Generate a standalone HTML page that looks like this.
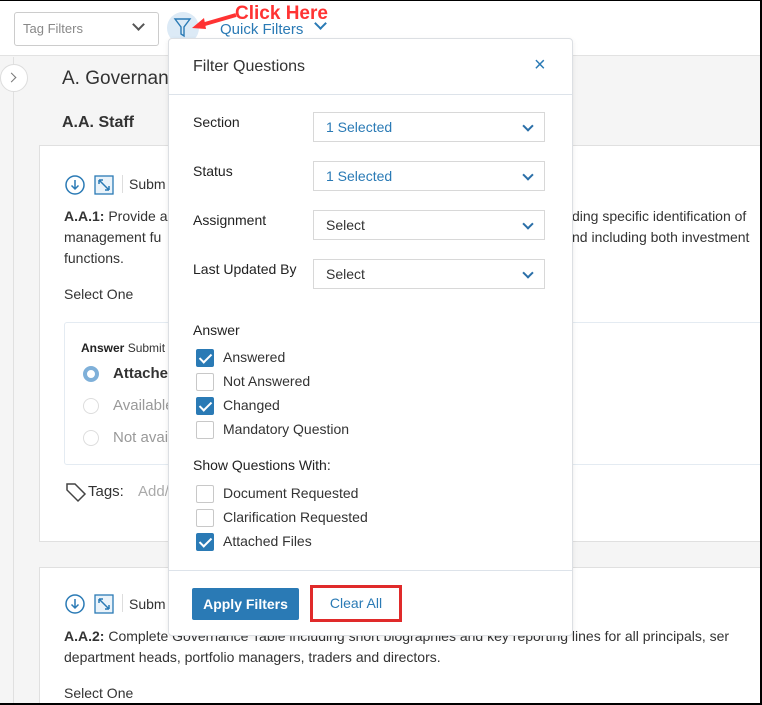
<!DOCTYPE html>
<html><head><style>
*{box-sizing:border-box;margin:0;padding:0}
html,body{width:762px;height:705px;overflow:hidden}
body{background:#000;font-family:"Liberation Sans",sans-serif;font-size:14px;color:#333;position:relative}
.page{position:absolute;left:0;top:1px;width:760px;height:702px;background:#f5f5f5;overflow:hidden}
.abs{position:absolute}
.t{position:absolute;white-space:nowrap}
.cb{position:absolute;left:196px;width:18px;height:18px;border:1px solid #c8c8c8;border-radius:2px;background:#fff}
.cb.on{background:#2a7ab5;border-color:#2a7ab5}
.cb.on:after{content:"";position:absolute;left:5px;top:1px;width:5px;height:10px;border:solid #fff;border-width:0 2px 2px 0;transform:rotate(45deg)}
.sel{position:absolute;left:313px;width:232px;height:30px;border:1px solid #d8d8d8;background:#fff;padding:6px 12px;font-size:14px}
.chev{position:absolute;right:12px;top:9px;width:8px;height:8px;border:solid #2a6fa8;border-width:0 2px 2px 0;transform:rotate(45deg)}
.lab{position:absolute;left:193px;font-size:14px;color:#222}
.cl{position:absolute;left:223px;font-size:14px;color:#333}
</style></head><body>
<div class="page">
 <div class="abs" style="left:0;top:0;width:760px;height:55px;background:#fff;border-bottom:1px solid #e2e2e2"></div>
 <div class="abs" style="left:14px;top:11px;width:145px;height:34px;border:1px solid #ccc;border-radius:3px;background:#fff"></div>
 <div class="t" style="left:23px;top:20px;color:#888;font-size:13px">Tag Filters</div>
 <div class="abs" style="left:134px;top:19px;width:9px;height:9px;border:solid #555;border-width:0 2px 2px 0;transform:rotate(45deg)"></div>
 <div class="abs" style="left:167px;top:11px;width:32px;height:32px;border-radius:50%;background:#dceaf6"></div>
 <svg class="abs" style="left:173px;top:15px" width="20" height="22" viewBox="0 0 20 22"><path d="M2 3h15l-6 8v9l-3-2v-7z" fill="none" stroke="#2a7ab5" stroke-width="1.4"/></svg>
 <div class="t" style="left:220px;top:20px;color:#2a7ab5;font-size:15px">Quick Filters</div>
 <div class="abs" style="left:316px;top:18px;width:9px;height:9px;border:solid #2a7ab5;border-width:0 2px 2px 0;transform:rotate(45deg)"></div>
 <div class="t" style="left:235px;top:2px;color:#f33;font-size:19px;font-weight:bold">Click Here</div>
 <svg class="abs" style="left:190px;top:10px" width="50" height="20"><path d="M46 4L8 15" stroke="#f33" stroke-width="4"/><path d="M2 17l12-10 2 11z" fill="#f33"/></svg>
 <div class="abs" style="left:13px;top:56px;width:1px;height:646px;background:#e0e0e0"></div>
 <div class="abs" style="left:0;top:63px;width:28px;height:28px;border-radius:50%;background:#fff;border:1px solid #ddd"></div>
 <div class="abs" style="left:8px;top:73px;width:7px;height:7px;border:solid #777;border-width:1.5px 1.5px 0 0;transform:rotate(45deg)"></div>
 <div class="t" style="left:62px;top:67px;font-size:19px;color:#333">A. Governance</div>
 <div class="t" style="left:62px;top:113px;font-size:16px;font-weight:bold;color:#333">A.A. Staff</div>
 <div class="abs" style="left:39px;top:144px;width:730px;height:397px;background:#fff;border:1px solid #e0e0e0"></div>
 <svg class="abs" style="left:65px;top:174px" width="20" height="20"><circle cx="10" cy="10" r="9" fill="none" stroke="#2a7ab5" stroke-width="1.5"/><path d="M10 5v9M6.5 10.5L10 14l3.5-3.5" fill="none" stroke="#2a7ab5" stroke-width="1.5"/></svg>
 <svg class="abs" style="left:94px;top:174px" width="20" height="20"><rect x="1" y="1" width="18" height="18" fill="#eaf3fa" stroke="#2a7ab5" stroke-width="1.3"/><path d="M5 5l10 10M5 5h4M5 5v4M15 15h-4M15 15v-4" stroke="#2a7ab5" stroke-width="1.5" fill="none"/></svg>
 <div class="abs" style="left:122px;top:174px;width:1px;height:18px;background:#ddd"></div>
 <div class="t" style="left:129px;top:175px;font-size:14px">Subm</div>
 <div class="t" style="left:64px;top:205px;font-size:14px;line-height:21px"><b>A.A.1:</b> Provide a<br>management fu<br>functions.</div>
 <div class="t" style="left:572px;top:205px;font-size:14px;line-height:21px">ding specific identification of<br>nd including both investment</div>
 <div class="t" style="left:64px;top:285px">Select One</div>
 <div class="abs" style="left:64px;top:321px;width:710px;height:143px;border:1px solid #e4ebf2;border-radius:3px"></div>
 <div class="t" style="left:81px;top:340px;font-size:12px"><b style="color:#222">Answer</b> Submit</div>
 <div class="abs" style="left:83px;top:365px;width:16px;height:16px;border-radius:50%;border:4px solid #7fb0d9;background:#fff"></div>
 <div class="t" style="left:113px;top:364px;font-size:15px;font-weight:bold;color:#333">Attached</div>
 <div class="abs" style="left:83px;top:397px;width:16px;height:16px;border-radius:50%;border:1px solid #ddd"></div>
 <div class="t" style="left:113px;top:396px;font-size:15px;color:#999">Available</div>
 <div class="abs" style="left:83px;top:429px;width:16px;height:16px;border-radius:50%;border:1px solid #ddd"></div>
 <div class="t" style="left:113px;top:428px;font-size:15px;color:#999">Not avai</div>
 <svg class="abs" style="left:65px;top:480px" width="22" height="22"><path d="M2 3h8l10 10-7 7L2 9z" fill="none" stroke="#444" stroke-width="1.5"/></svg>
 <div class="t" style="left:88px;top:482px;font-size:15px">Tags:</div>
 <div class="t" style="left:138px;top:482px;font-size:15px;color:#aaa">Add/</div>
 <div class="abs" style="left:39px;top:566px;width:721px;height:136px;background:#fff;border:1px solid #e0e0e0;border-right:none;border-bottom:none"></div>
 <svg class="abs" style="left:65px;top:593px" width="20" height="20"><circle cx="10" cy="10" r="9" fill="none" stroke="#2a7ab5" stroke-width="1.5"/><path d="M10 5v9M6.5 10.5L10 14l3.5-3.5" fill="none" stroke="#2a7ab5" stroke-width="1.5"/></svg>
 <svg class="abs" style="left:94px;top:593px" width="20" height="20"><rect x="1" y="1" width="18" height="18" fill="#eaf3fa" stroke="#2a7ab5" stroke-width="1.3"/><path d="M5 5l10 10M5 5h4M5 5v4M15 15h-4M15 15v-4" stroke="#2a7ab5" stroke-width="1.5" fill="none"/></svg>
 <div class="abs" style="left:122px;top:593px;width:1px;height:18px;background:#ddd"></div>
 <div class="t" style="left:129px;top:595px">Subm</div>
 <div class="t" style="left:64px;top:625px;line-height:21px"><b>A.A.2:</b> Complete Governance Table including short biographies and key reporting lines for all principals, ser<br>department heads, portfolio managers, traders and directors.</div>
 <div class="t" style="left:64px;top:684px">Select One</div>
 <div class="abs" style="left:168px;top:37px;width:405px;height:598px;background:#fff;border:1px solid #dcdfe3;border-radius:4px;box-shadow:0 2px 6px rgba(0,0,0,.08)"></div>
 <div class="t" style="left:193px;top:57px;font-size:16px;color:#333">Filter Questions</div>
 <div class="t" style="left:534px;top:53px;font-size:20px;color:#2a7ab5">×</div>
 <div class="abs" style="left:169px;top:93px;width:403px;height:1px;background:#dde3ea"></div>
 <div class="lab" style="top:113px">Section</div>
 <div class="sel" style="top:111px;color:#2a7ab5">1 Selected<span class="chev"></span></div>
 <div class="lab" style="top:162px">Status</div>
 <div class="sel" style="top:160px;color:#2a7ab5">1 Selected<span class="chev"></span></div>
 <div class="lab" style="top:211px">Assignment</div>
 <div class="sel" style="top:209px;color:#333">Select<span class="chev"></span></div>
 <div class="lab" style="top:260px">Last Updated By</div>
 <div class="sel" style="top:258px;color:#333">Select<span class="chev"></span></div>
 <div class="lab" style="top:321px">Answer</div>
 <div class="cb on" style="top:348px"></div><div class="cl" style="top:348px">Answered</div>
 <div class="cb" style="top:372px"></div><div class="cl" style="top:372px">Not Answered</div>
 <div class="cb on" style="top:396px"></div><div class="cl" style="top:396px">Changed</div>
 <div class="cb" style="top:420px"></div><div class="cl" style="top:420px">Mandatory Question</div>
 <div class="lab" style="top:456px">Show Questions With:</div>
 <div class="cb" style="top:484px"></div><div class="cl" style="top:484px">Document Requested</div>
 <div class="cb" style="top:508px"></div><div class="cl" style="top:508px">Clarification Requested</div>
 <div class="cb on" style="top:532px"></div><div class="cl" style="top:532px">Attached Files</div>
 <div class="abs" style="left:169px;top:569px;width:403px;height:1px;background:#dde3ea"></div>
 <div class="abs" style="left:192px;top:587px;width:107px;height:32px;background:#2a7ab5;border-radius:2px;color:#fff;font-size:14px;font-weight:bold;text-align:center;line-height:32px">Apply Filters</div>
 <div class="abs" style="left:310px;top:584px;width:92px;height:37px;border:3px solid #e02a2a;color:#2a7ab5;font-size:14px;text-align:center;line-height:31px">Clear All</div>
</div>
</body></html>
